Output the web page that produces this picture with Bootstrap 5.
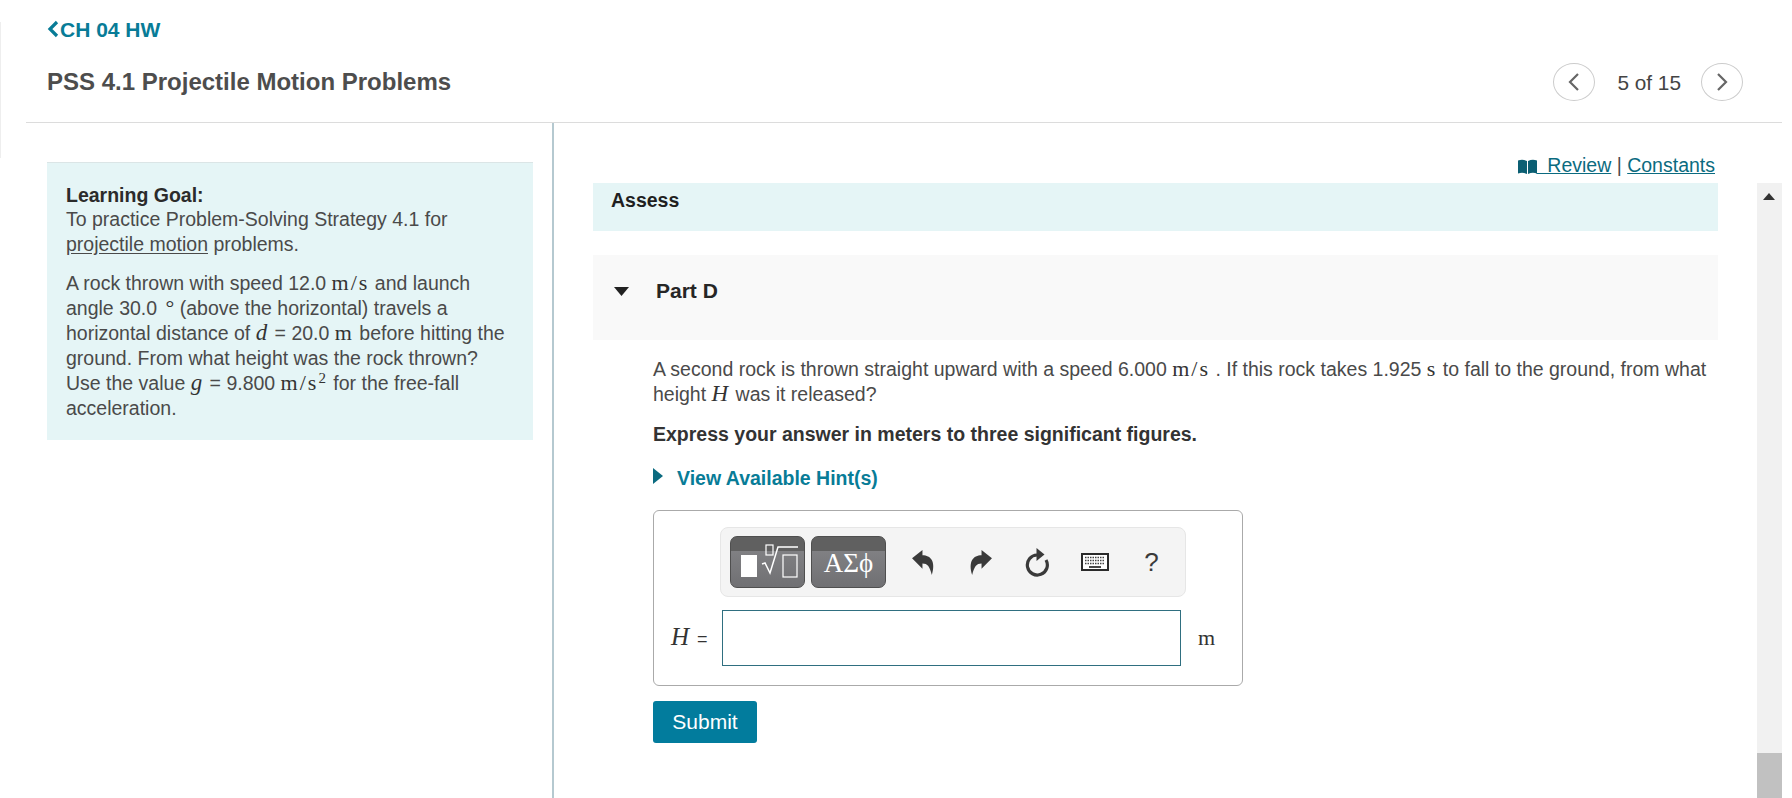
<!DOCTYPE html>
<html lang="en">
<head>
  <meta charset="UTF-8" />
  <meta name="viewport" content="width=device-width, initial-scale=1" />
  <title>PSS 4.1 Projectile Motion Problems</title>
  <link href="https://cdn.jsdelivr.net/npm/bootstrap@5.3.2/dist/css/bootstrap.min.css" rel="stylesheet" />
  <style>
    html, body {
      height: 100%;
      overflow: hidden;
    }
    body {
      background: #fff;
      color: #4a4a4a;
      font-family: "Liberation Sans", Arial, sans-serif;
      font-size: 19.5px;
      line-height: 25px;
    }
    a { color: #0b6b80; }
    .page-wrap { height: 798px; padding: 0 10px 0 26px; }
    .side-tick { position: absolute; left: 0; top: 22px; width: 1px; height: 136px; background: #eee; }
    .top-head { height: 123px; padding: 17px 0 0 21px; border-bottom: 1px solid #dcdcdc; }
    .back-link { color: #087c97; font-size: 21px; font-weight: 700; text-decoration: none; line-height: 26px; }
    .back-link svg { margin-right: 1px; vertical-align: -1px; }
    .quiz-title { color: #4d4d4d; font-size: 24px; font-weight: 700; line-height: 30px; margin: 0; }
    .title-row { margin-top: 20px; padding-right: 39px; }
    .pager-btn {
      width: 42px; height: 38px; padding: 0;
      background: #fff; border: 1px solid #ccc; border-radius: 50%;
      display: flex; align-items: center; justify-content: center;
    }
    .pager-count { color: #444; font-size: 20.8px; margin: 0 20px 0 22px; }
    .main-row { height: 675px; }
    .left-col { width: 528px; flex: none; padding: 39px 19px 0 21px; border-right: 2px solid #b5c9d0; }
    .goal-box { background: #e5f5f6; border-top: 1px solid #dbe5e6; padding: 21px 20px 19px 19px; }
    .goal-box p { margin: 0 0 14px; }
    .goal-box p:last-child { margin-bottom: 0; }
    .goal-box strong { color: #2b2b2b; display: block; line-height: 23px; }
    .goal-box u { text-underline-offset: 2px; }
    .math { font-family: "Liberation Serif", "Times New Roman", serif; font-size: 22px; line-height: 1; letter-spacing: 2px; color: #333; }
    .math i { font-size: 23px; }
    .math sup { font-size: 15px; line-height: 0; }
    .deg-mark { margin-left: 3px; letter-spacing: 0; }
    .right-col { width: 1164px; flex: none; padding: 26px 0 0 39px; }
    .res-links { text-align: right; padding-right: 3px; height: 34px; line-height: 32px; }
    .assess-bar { background: #e5f5f6; height: 48px; padding: 5px 18px; color: #1f1f1f; font-weight: 700; }
    .part-bar { background: #f9f9f9; height: 85px; margin-top: 24px; padding: 23px 21px; color: #262626; font-size: 21px; font-weight: 700; }
    .part-bar svg { margin-right: 27px; vertical-align: 2px; }
    .part-body { padding: 17px 6px 0 60px; }
    .part-body p { margin: 0 0 15px; }
    .instr { color: #333; font-weight: 700; }
    .hint-link { color: #087c97; font-weight: 700; text-decoration: none; display: block; margin: 19px 0; }
    .hint-link svg { margin-right: 14px; vertical-align: 1px; }
    .answer-box { width: 590px; height: 176px; border: 1px solid #aaa; border-radius: 6px; padding: 16px 0 0 17px; }
    .tool-strip {
      width: 466px; height: 70px; margin-left: 49px;
      background: #f4f4f4; border: 1px solid #e6e6e6; border-radius: 8px; padding: 8px 9px;
    }
    .pal-btn {
      width: 75px; height: 52px; border-radius: 7px; border: 1px solid #4f4f4f; flex: none;
      background: linear-gradient(#606060 0 14px, #808083 14px, #707073 100%);
      color: #fff; display: flex; align-items: center; justify-content: center;
    }
    .pal-gap { margin-left: 6px; }
    .pal-greek { font-family: "Liberation Serif", serif; font-size: 27px; padding-top: 3px; }
    .tool-first { margin-left: 9px; }
    .tool-ico { width: 57px; flex: none; display: flex; justify-content: center; align-items: center; }
    .tool-help { color: #3a3a3a; font-size: 26px; }
    .input-row { margin-top: 13px; }
    .var-label { width: 51px; flex: none; color: #333; font-size: 18px; }
    .var-label .math { margin-right: 6px; }
    .var-label .math i { font-size: 25px; }
    .ans-input { width: 459px; height: 56px; border: 1px solid #2f6f80; border-radius: 0; flex: none; }
    .unit-label { margin-left: 17px; }
    .btn-submit {
      background: #027c9d; color: #fff; width: 104px; height: 42px; margin-top: 15px;
      border: 0; border-radius: 3px; font-size: 21px; padding: 0;
    }
    .fake-scroll { width: 25px; flex: none; margin: 60px 0 0 39px; background: #f1f1f1; }
    .fake-scroll svg { margin: 10px 0 0 6px; display: block; }
    .scroll-thumb { height: 45px; background: #c1c1c1; }
  </style>
</head>
<body>
  <div class="side-tick"></div>
  <div class="page-wrap">

    <!-- Header -->
    <header class="top-head">
      <a class="back-link" href="#"><svg width="12" height="18" viewBox="0 0 12 18"><path d="M10 2 3 9l7 7" fill="none" stroke="#087c97" stroke-width="3.2"/></svg>CH 04 HW</a>
      <div class="title-row d-flex align-items-center justify-content-between">
        <h1 class="quiz-title">PSS 4.1 Projectile Motion Problems</h1>
        <div class="d-flex align-items-center">
          <button class="pager-btn" aria-label="Previous"><svg width="14" height="20" viewBox="0 0 14 20"><path d="M11 2 3 10l8 8" fill="none" stroke="#666" stroke-width="2.2"/></svg></button>
          <span class="pager-count">5 of 15</span>
          <button class="pager-btn" aria-label="Next"><svg width="14" height="20" viewBox="0 0 14 20"><path d="m3 2 8 8-8 8" fill="none" stroke="#666" stroke-width="2.2"/></svg></button>
        </div>
      </div>
    </header>

    <div class="main-row d-flex">
      <!-- Learning goal -->
      <aside class="left-col">
        <div class="goal-box">
          <p><strong>Learning Goal:</strong>To practice Problem-Solving Strategy 4.1 for <u>projectile motion</u> problems.</p>
          <p>A rock thrown with speed 12.0 <span class="math">m/s</span> and launch angle 30.0 <span class="math deg-mark">&deg;</span> (above the horizontal) travels a horizontal distance of <span class="math"><i>d</i></span> = 20.0 <span class="math">m</span> before hitting the ground. From what height was the rock thrown? Use the value <span class="math"><i>g</i></span> = 9.800 <span class="math">m/s<sup>2</sup></span> for the free-fall acceleration.</p>
        </div>
      </aside>

      <!-- Part -->
      <main class="right-col">
        <div class="res-links">
          <a href="#"><svg width="19" height="15" viewBox="0 0 19 15"><path d="M0 1.500C3 .5 6 .5 9 2v13C6 13.500 3 13.500 0 14.500zM19 1.500C16 .5 13 .5 10 2v13c3-1.500 6-1.500 9-.5z" fill="#0b5f73"/></svg>&nbsp;&nbsp;Review</a> | <a href="#">Constants</a>
        </div>
        <div class="assess-bar">Assess</div>
        <div class="part-bar"><svg width="15" height="9" viewBox="0 0 17 10"><path d="M0 0h17L8.500 10z" fill="#222"/></svg>Part D</div>
        <div class="part-body">
          <p>A second rock is thrown straight upward with a speed 6.000 <span class="math">m/s</span> . If this rock takes 1.925 <span class="math">s</span> to fall to the ground, from what height <span class="math"><i>H</i></span> was it released?</p>
          <p class="instr">Express your answer in meters to three significant figures.</p>
          <a class="hint-link" href="#"><svg width="10" height="16" viewBox="0 0 10 16"><path d="M0 0l10 8-10 8z" fill="#0b6b80"/></svg>View Available Hint(s)</a>

          <div class="answer-box">
            <div class="tool-strip d-flex align-items-center">
              <div class="pal-btn">
                <svg width="73" height="50" viewBox="0 0 73 50">
                  <rect x="10" y="18" width="16" height="22" fill="#fff"/>
                  <rect x="35" y="8" width="7" height="10" fill="none" stroke="#fff" stroke-width="1.200"/>
                  <path d="M31 27l3-1 5 10 8-26h20" fill="none" stroke="#fff" stroke-width="1.500"/>
                  <rect x="52" y="18" width="14" height="22" fill="none" stroke="#fff" stroke-width="1.200"/>
                </svg>
              </div>
              <div class="pal-btn pal-gap"><span class="pal-greek">ΑΣϕ</span></div>
              <div class="tool-ico tool-first"><svg width="25" height="29" viewBox="0 0 24 26"><path d="M1 9 11 1v5c8 0 13 6 9 19-2-8-4-11-9-11v5z" fill="#3a3a3a"/></svg></div>
              <div class="tool-ico"><svg width="25" height="29" viewBox="0 0 24 26"><path d="M23 9 13 1v5C5 6 0 12 4 25c2-8 4-11 9-11v5z" fill="#3a3a3a"/></svg></div>
              <div class="tool-ico"><svg width="25" height="29" viewBox="0 0 25 29"><path d="M21 12A10 10 0 1 1 12 7" fill="none" stroke="#3a3a3a" stroke-width="3.200"/><path d="M11.500 0l8 6.500-8 6.500z" fill="#3a3a3a"/></svg></div>
              <div class="tool-ico"><svg width="28" height="18" viewBox="0 0 28 18"><rect x="1" y="1" width="26" height="16" fill="#fff" stroke="#2a2a2a" stroke-width="2"/><path d="M4 4.500h20M4 7.500h20M4 10.500h20" stroke="#444" stroke-width="1.600" stroke-dasharray="1.500 1"/><path d="M8 14h12" stroke="#333" stroke-width="1.800"/></svg></div>
              <div class="tool-ico tool-help">?</div>
            </div>
            <div class="input-row d-flex align-items-center">
              <div class="var-label"><span class="math"><i>H</i></span>=</div>
              <input class="form-control ans-input" type="text" aria-label="H" />
              <span class="math unit-label">m</span>
            </div>
          </div>
          <button class="btn btn-submit">Submit</button>
        </div>
      </main>

      <!-- Scroll track -->
      <div class="fake-scroll d-flex flex-column justify-content-between">
        <svg width="12" height="7" viewBox="0 0 12 7"><path d="M0 7 6 0l6 7z" fill="#333"/></svg>
        <div class="scroll-thumb"></div>
      </div>
    </div>
  </div>
</body>
</html>
